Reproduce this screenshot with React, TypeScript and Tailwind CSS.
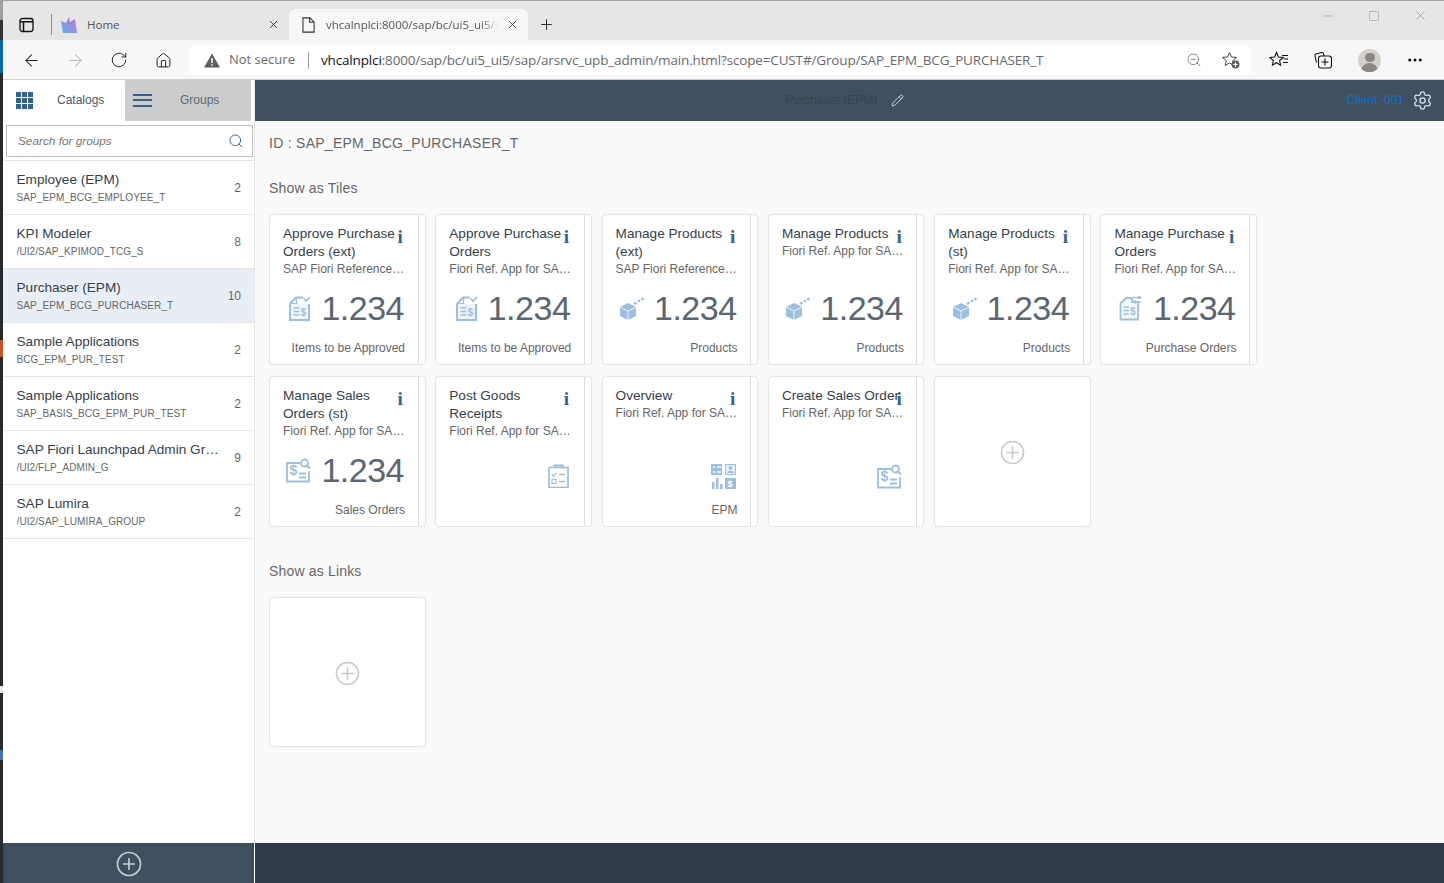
import React from "react";
import { ArrowLeft, ArrowRight, RotateCw, Home, ZoomOut, Plus, X, Minus, Square, Search, Pencil, Settings, MoreHorizontal } from "lucide-react";

const blue = "#9dbfdf";

function IconApprove() {
  return (
    <svg width="22" height="25" viewBox="0 0 22 25" fill="none">
      <path d="M1 7.500 7 1.500h7M20 8v16H1V7.500" stroke={blue} strokeWidth="2" fill="#eef4fa" />
      <path d="M7.500 2v5.500H1.500" stroke={blue} strokeWidth="1.200" />
      <path d="M4.500 12h6M4.500 15.500h6M4.500 19h6" stroke={blue} strokeWidth="1.700" />
      <text x="11.500" y="20" fontSize="10" fontWeight="700" fill={blue} fontFamily="Liberation Sans">$</text>
      <path d="m14.500 2.500 2.500 2.500 4-4" stroke={blue} strokeWidth="1.700" />
    </svg>
  );
}
function IconPurchase() {
  return (
    <svg width="24" height="26" viewBox="0 0 24 26" fill="none">
      <path d="M1.500 8.500 7 3h6v4h6v17.500H1.500z" stroke={blue} strokeWidth="1.800" fill="#f4f8fc" />
      <path d="M4.500 12h5.500M4.500 15.500h5.500M4.500 19h5.500" stroke={blue} strokeWidth="1.700" />
      <text x="11" y="20" fontSize="10" fontWeight="700" fill={blue} fontFamily="Liberation Sans">$</text>
      <path d="M14 2.500h7M19.500 1l2.500 1.500-2.500 1.500M22 7h-7M17 5.500 14.500 7l2.500 1.500" stroke={blue} strokeWidth="1.300" />
    </svg>
  );
}
function IconBox() {
  return (
    <svg width="24" height="24" viewBox="0 0 24 24" fill="none">
      <path d="M8 7 16 11v9l-8 4-8-4v-9z" fill={blue} />
      <path d="M8 15v9M8 15l8-4M8 15 0 11" stroke="#fff" strokeWidth="0.800" />
      <path d="M14 8l2.500-1.500M18 5.500l2-1.100M21.300 3.600 23.500 2.400" stroke={blue} strokeWidth="2.400" />
    </svg>
  );
}
function IconSales() {
  return (
    <svg width="25" height="25" viewBox="0 0 25 25" fill="none">
      <path d="M14 5H1v18.500h22V13" stroke={blue} strokeWidth="1.800" />
      <text x="3.500" y="17" fontSize="14" fontWeight="700" fill={blue} fontFamily="Liberation Sans">$</text>
      <path d="M13 15.500h7M13 19.500h7" stroke={blue} strokeWidth="1.800" />
      <circle cx="18.500" cy="5" r="3.500" stroke={blue} strokeWidth="1.800" />
      <path d="m21 7.500 3 3" stroke={blue} strokeWidth="2" />
    </svg>
  );
}
function IconClipboard() {
  return (
    <svg width="21" height="24" viewBox="0 0 21 24" fill="none">
      <rect x="1" y="3.500" width="19" height="20" stroke={blue} strokeWidth="1.700" />
      <path d="M6.500 3.500V1.500h8v2" stroke={blue} strokeWidth="2" />
      <path d="m4 10.500 1.500 1.500 3-3M11 10.500h6M11 17.500h6" stroke={blue} strokeWidth="1.300" />
      <rect x="4" y="15.500" width="4" height="4" stroke={blue} strokeWidth="1.200" />
    </svg>
  );
}
function IconOverview() {
  return (
    <svg width="25" height="25" viewBox="0 0 25 25" fill="none">
      <rect x="0" y="0" width="11" height="11" fill={blue} />
      <path d="M2 3h2M6 3h4M2 8h2M6 8h4" stroke="#fff" strokeWidth="1.300" />
      <rect x="14.500" y="0.500" width="10" height="10" stroke={blue} fill="#eaf1f8" />
      <circle cx="19.500" cy="4" r="2" fill={blue} />
      <path d="M16 9c0-3 7-3 7 0z" fill={blue} />
      <path d="M1 25V18h2.500v7zM5 25V14h2.500v11zM9 25v-5h2.500v5z" fill={blue} />
      <rect x="14" y="14" width="11" height="11" fill={blue} />
      <text x="16.500" y="23" fontSize="9.500" fontWeight="700" fill="#fff" fontFamily="Liberation Sans">$</text>
    </svg>
  );
}

function Info() {
  return (
    <span className="absolute left-[127.500px] top-[11px] font-['Liberation_Serif',serif] font-bold text-[19px] leading-[22px] text-[#346187]">i</span>
  );
}

type T = { title: string; sub: string; icon: React.ReactNode; num?: boolean; foot?: string };

const row1: T[] = [
  { title: "Approve Purchase Orders (ext)", sub: "SAP Fiori Reference Apps", icon: <IconApprove />, num: true, foot: "Items to be Approved" },
  { title: "Approve Purchase Orders", sub: "Fiori Ref. App for SAP EPM", icon: <IconApprove />, num: true, foot: "Items to be Approved" },
  { title: "Manage Products (ext)", sub: "SAP Fiori Reference Apps", icon: <IconBox />, num: true, foot: "Products" },
  { title: "Manage Products", sub: "Fiori Ref. App for SAP EPM", icon: <IconBox />, num: true, foot: "Products" },
  { title: "Manage Products (st)", sub: "Fiori Ref. App for SAP EPM", icon: <IconBox />, num: true, foot: "Products" },
  { title: "Manage Purchase Orders", sub: "Fiori Ref. App for SAP EPM", icon: <IconPurchase />, num: true, foot: "Purchase Orders" },
];
const row2: T[] = [
  { title: "Manage Sales Orders (st)", sub: "Fiori Ref. App for SAP EPM", icon: <IconSales />, num: true, foot: "Sales Orders" },
  { title: "Post Goods Receipts", sub: "Fiori Ref. App for SAP EPM", icon: <IconClipboard /> },
  { title: "Overview", sub: "Fiori Ref. App for SAP EPM", icon: <IconOverview />, foot: "EPM" },
  { title: "Create Sales Order", sub: "Fiori Ref. App for SAP EPM", icon: <IconSales /> },
];

function Tile({ t }: { t: T }) {
  return (
    <div className="relative h-[148.500px] w-[154.500px] flex rounded-[3px] bg-white shadow-[0_0_2px_rgba(0,0,0,0.3)]">
      <div className="w-[148.500px] border-r border-[#dcdcdc] pt-[10px] pl-[13px] flex flex-col">
        <div className="h-[53px] w-[124px]">
          <div className="text-[13.600px] leading-[18px] text-[#333f4a] max-h-[36px] overflow-hidden whitespace-normal">{t.title}</div>
          <div className="w-[122px] text-[12px] leading-[17px] text-[#666] truncate">{t.sub}</div>
        </div>
        <div className="mt-[8px] h-[44px] w-[121px] flex items-center justify-end gap-[10px]">
          {t.num ? (
            <>
              <span className="shrink-0">{t.icon}</span>
              <span className="text-[34px] leading-[44px] text-[#5a6772] tracking-[-0.5px]">1.234</span>
            </>
          ) : (
            <span className="mt-[12px] mr-[1px]">{t.icon}</span>
          )}
        </div>
        <div className="mt-[11px] w-[122px] text-right text-[12px] leading-[14px] text-[#666]">{t.foot}</div>
      </div>
      <Info />
    </div>
  );
}

function AddTile() {
  return (
    <div className="h-[148.500px] w-[154.500px] rounded-[3px] bg-white shadow-[0_0_2px_rgba(0,0,0,0.3)] flex items-center justify-center">
      <svg width="25" height="25" viewBox="0 0 26 26" fill="none" className="mt-[2px]">
        <circle cx="13" cy="13" r="11.500" stroke="#c8c8c8" strokeWidth="1.600" />
        <path d="M13 6.500v13M6.500 13h13" stroke="#c8c8c8" strokeWidth="1.600" />
      </svg>
    </div>
  );
}

const groups = [
  { t: "Employee (EPM)", s: "SAP_EPM_BCG_EMPLOYEE_T", n: 2 },
  { t: "KPI Modeler", s: "/UI2/SAP_KPIMOD_TCG_S", n: 8 },
  { t: "Purchaser (EPM)", s: "SAP_EPM_BCG_PURCHASER_T", n: 10, sel: true },
  { t: "Sample Applications", s: "BCG_EPM_PUR_TEST", n: 2 },
  { t: "Sample Applications", s: "SAP_BASIS_BCG_EPM_PUR_TEST", n: 2 },
  { t: "SAP Fiori Launchpad Admin Group", s: "/UI2/FLP_ADMIN_G", n: 9 },
  { t: "SAP Lumira", s: "/UI2/SAP_LUMIRA_GROUP", n: 2 },
];

function GroupRow({ g }: { g: (typeof groups)[number] }) {
  return (
    <div className={`h-[54px] border-b border-[#e5e5e5] flex items-center pl-[13.500px] pr-[13px] pt-[2px] ${g.sel ? "bg-[#e8eef5]" : "bg-white"}`}>
      <div className="flex-1 min-w-0">
        <div className="text-[13.600px] leading-[18px] text-[#333f4a] truncate w-[204px]">{g.t}</div>
        <div className="text-[10px] leading-[18px] tracking-[0.1px] text-[#666] truncate">{g.s}</div>
      </div>
      <span className="text-[12px] text-[#666] -mt-[2px]">{g.n}</span>
    </div>
  );
}

const chrome = "font-['Open_Sans',sans-serif]";

export default function App() {
  return (
    <div className="h-[883px] w-[1444px] flex overflow-hidden font-['Liberation_Sans',sans-serif]">
      <div className="w-[3px] flex flex-col shrink-0 bg-[#262a2d]">
        <div className="h-[20px] bg-[#a0a0a0]" />
        <div className="h-[20px] bg-[#333]" />
        <div className="h-[33px] bg-[#0a6a9e]" />
        <div className="h-[267px]" />
        <div className="h-[17px] bg-[#c8502a]" />
        <div className="h-[329px]" />
        <div className="h-[7px] bg-[#e8e8e8]" />
        <div className="h-[57px]" />
        <div className="h-[10px] bg-[#4a6fb0]" />
      </div>
      <div className="flex-1 min-w-0 flex flex-col">
        {/* tab strip */}
        <div className={`h-[40px] bg-[#e6e6e6] border-t border-[#a0a0a0] flex items-end ${chrome}`}>
          <div className="w-[48px] h-[31px] flex items-center justify-center">
            <svg width="16" height="16" viewBox="0 0 16 16" fill="none">
              <rect x="1" y="1.500" width="13" height="13" rx="2.500" stroke="#111" strokeWidth="1.300" />
              <path d="M1 4.800h13M4.500 4.800v9.500" stroke="#111" strokeWidth="1.500" />
            </svg>
          </div>
          <div className="h-[31px] flex items-center">
            <div className="w-px h-[21px] bg-[#8c8c8c]" />
          </div>
          <div className="w-[237px] h-[31px] flex items-center pl-[9px] pr-[9px] shrink-0">
            <svg width="16" height="16" viewBox="0 0 16 16" className="shrink-0">
              <defs>
                <linearGradient id="fav" x1="0" y1="1" x2="1" y2="0">
                  <stop offset="0" stopColor="#5ab4e8" />
                  <stop offset="1" stopColor="#c96fd0" />
                </linearGradient>
              </defs>
              <path d="M0 4l5 2 3-6 1 5 5-3 2 14H2z" fill="url(#fav)" />
            </svg>
            <span className="ml-[10px] text-[11.500px] text-[#555] flex-1">Home</span>
            <X size={13} strokeWidth={1.600} className="text-[#333]" />
          </div>
          <div className="w-[239px] h-[31px] bg-[#f7f7f7] rounded-t-[6px] flex items-center pl-[13px] pr-[9px] shrink-0">
            <svg width="13" height="16" viewBox="0 0 12 15" fill="none" className="shrink-0">
              <path d="M.8.800h6.500l4 4v9.400H.8zM7 1v4h4" stroke="#333" strokeWidth="1" />
            </svg>
            <span className="ml-[11px] text-[11.500px] text-[#555] flex-1 overflow-hidden whitespace-nowrap [mask-image:linear-gradient(90deg,#000_90%,transparent)]">vhcalnplci:8000/sap/bc/ui5_ui5/sap/arsrvc</span>
            <X size={13} strokeWidth={1.600} className="text-[#333] ml-[7px] shrink-0" />
          </div>
          <div className="h-[31px] flex items-center ml-[10px]">
            <Plus size={17} strokeWidth={1.300} className="text-[#222]" />
          </div>
          <div className="flex-1" />
          <div className="self-start h-[29px] flex items-center text-[#888] pr-[1px]">
            <span className="w-[46px] flex justify-center"><Minus size={14} strokeWidth={1} /></span>
            <span className="w-[46px] flex justify-center"><Square size={12} strokeWidth={1} /></span>
            <span className="w-[46px] flex justify-center"><X size={15} strokeWidth={1} /></span>
          </div>
        </div>
        {/* address row */}
        <div className={`h-[40px] bg-[#f7f7f7] border-b border-[#cfcfcf] flex items-center pl-[19px] pt-[1px] ${chrome}`}>
          <ArrowLeft size={19} strokeWidth={1.300} className="text-[#222]" />
          <ArrowRight size={19} strokeWidth={1.300} className="text-[#bbb] ml-[25px]" />
          <RotateCw size={18} strokeWidth={1.300} className="text-[#222] ml-[25px]" />
          <Home size={17} strokeWidth={1.400} className="text-[#222] ml-[27px]" />
          <div className="ml-[18px] w-[1060px] h-[30px] rounded-[4px] bg-white flex items-center pl-[14px] pr-[9px]">
            <svg width="16" height="15" viewBox="0 0 16 15">
              <path d="M8 .5 16 14.500H0z" fill="#5f5f5f" />
              <path d="M8 5v5M8 11.200v1.600" stroke="#fff" strokeWidth="1.500" />
            </svg>
            <span className="ml-[9px] text-[13px] text-[#6b6b6b]">Not secure</span>
            <span className="ml-[13px] w-px h-[17px] bg-[#999]" />
            <span className="ml-[12px] text-[13.500px] text-[#6a6a6a] whitespace-nowrap flex-1 tracking-[-0.15px]">
              <span className="text-[#111]">vhcalnplci</span>:8000/sap/bc/ui5_ui5/sap/arsrvc_upb_admin/main.html?scope=CUST#/Group/SAP_EPM_BCG_PURCHASER_T
            </span>
            <ZoomOut size={16} strokeWidth={1.200} className="text-[#666] mr-[19px]" />
            <svg width="20" height="20" viewBox="0 0 20 20" fill="none">
              <path d="M8.500 2.500 10.500 7l5 .4-3.800 3.300 1.100 4.800-4.300-2.600-4.300 2.600 1.100-4.800L1.500 7.400l5-.4z" stroke="#444" strokeWidth="1" />
              <circle cx="14.500" cy="14.500" r="4" fill="#5f5f5f" />
              <path d="M14.500 12.300v4.400M12.300 14.500h4.400" stroke="#fff" strokeWidth="1" />
            </svg>
          </div>
          <svg width="20" height="18" viewBox="0 0 20 18" fill="none" className="ml-[19px]">
            <path d="M7.500 1.500 9.400 6l4.800.4-3.600 3.100 1 4.700-4.100-2.500-4.100 2.500 1-4.700L.8 6.400 5.600 6z" stroke="#111" strokeWidth="1.100" />
            <path d="M13 4.500h6M14.500 8h4.500M14 11.500h5" stroke="#111" strokeWidth="1.100" />
          </svg>
          <svg width="18" height="18" viewBox="0 0 18 18" fill="none" className="ml-[25px]">
            <rect x="4.500" y="5" width="13" height="12" rx="2.500" stroke="#111" strokeWidth="1.100" />
            <path d="M11 7.500v7M7.500 11h7" stroke="#111" strokeWidth="1.100" />
            <path d="M2.500 11.500 1 5q-.3-1.500 1-2l5.500-1.500q1.700-.3 2 1L10 5" stroke="#111" strokeWidth="1.100" />
          </svg>
          <div className="ml-[26px] w-[23px] h-[23px] rounded-full bg-[#d4d0cc] overflow-hidden flex flex-col items-center">
            <div className="mt-[4px] w-[10px] h-[10px] rounded-full bg-[#8b8782]" />
            <div className="mt-[1px] w-[17px] h-[10px] rounded-t-full bg-[#8b8782]" />
          </div>
          <MoreHorizontal size={18} strokeWidth={2} className="text-[#111] ml-[25px]" />
        </div>
        {/* body */}
        <div className="flex-1 min-h-0 flex">
          <div className="w-[252px] bg-white flex flex-col shrink-0">
            <div className="flex-1 min-h-0 border-r border-[#e5e5e5]">
              <div className="h-[41px] flex items-stretch">
                <div className="w-[122px] flex items-center pl-[13px]">
                  <div className="grid grid-cols-3 gap-[1px] w-[17px] h-[17px] -mt-[1px]">
                    {Array.from({ length: 9 }).map((_, i) => (
                      <span key={i} className="bg-[#346187]" />
                    ))}
                  </div>
                  <span className="ml-[24px] text-[12px] text-[#4a5a6a] -mt-[1px]">Catalogs</span>
                </div>
                <div className="w-[126px] bg-[#cccccc] flex items-center pl-[8px] rounded-[1px]">
                  <div className="w-[19px] flex flex-col gap-[3.500px] -mt-[1px]">
                    <span className="h-[2px] bg-[#346187]" />
                    <span className="h-[2px] bg-[#346187]" />
                    <span className="h-[2px] bg-[#346187]" />
                  </div>
                  <span className="ml-[28px] text-[12px] text-[#5a6a7a] -mt-[1px]">Groups</span>
                </div>
              </div>
              <div className="pt-[4px] pl-[3px] pr-[1px] pb-[3px]">
                <div className="h-[32px] border border-[#bdbdbd] bg-white flex items-center pl-[11px] pr-[8px]">
                  <span className="flex-1 text-[11.800px] italic text-[#777] pt-[1px]">Search for groups</span>
                  <Search size={16} strokeWidth={1.400} className="text-[#346187]" />
                </div>
              </div>
              <div className="border-t border-[#e5e5e5]">
                {groups.map((g, i) => (
                  <GroupRow key={i} g={g} />
                ))}
              </div>
            </div>
            <div className="h-[40px] pr-[1px]">
              <div className="h-full bg-[#3f5161] border-x-[3px] border-[#394a59] flex items-center justify-center pt-[1px]">
                <svg width="26" height="26" viewBox="0 0 26 26" fill="none">
                  <circle cx="13" cy="13" r="11.500" stroke="#c8ccd0" strokeWidth="1.700" />
                  <path d="M13 7v12M7 13h12" stroke="#c8ccd0" strokeWidth="1.700" />
                </svg>
              </div>
            </div>
          </div>
          <div className="flex-1 min-w-0 flex flex-col bg-[#fafafa]">
            <div className="h-[41px] bg-[#3f5161] flex items-center pr-[11px]">
              <div className="flex-1 flex items-center justify-center pl-[88px] -mt-[1px]">
                <span className="text-[12px] text-[#33444f]">Purchaser (EPM)</span>
                <Pencil size={13} strokeWidth={1.300} className="text-white ml-[14px]" />
              </div>
              <span className="text-[12px] text-[#0a6ed1] mr-[8px] -mt-[1px]">Client: 001</span>
              <Settings size={21} strokeWidth={1.400} className="text-[#dceaf5] -mt-[1px]" />
            </div>
            <div className="flex-1 min-h-0 pl-[14px]">
              <div className="mt-[11px] text-[14px] leading-[22px] text-[#666] tracking-[0.27px]">ID : SAP_EPM_BCG_PURCHASER_T</div>
              <div className="mt-[23px] text-[14px] leading-[22px] text-[#666] tracking-[0.17px]">Show as Tiles</div>
              <div className="mt-[16px] ml-[1px] grid grid-cols-[repeat(6,154.500px)] gap-x-[11.800px] gap-y-[13.900px]">
                {row1.map((t, i) => (
                  <Tile key={i} t={t} />
                ))}
                {row2.map((t, i) => (
                  <Tile key={i} t={t} />
                ))}
                <AddTile />
              </div>
              <div className="mt-[34px] text-[14px] leading-[22px] text-[#666] tracking-[0.17px]">Show as Links</div>
              <div className="mt-[16px] ml-[1px]">
                <AddTile />
              </div>
            </div>
            <div className="h-[40px] bg-[#2f3b48]" />
          </div>
        </div>
      </div>
    </div>
  );
}
